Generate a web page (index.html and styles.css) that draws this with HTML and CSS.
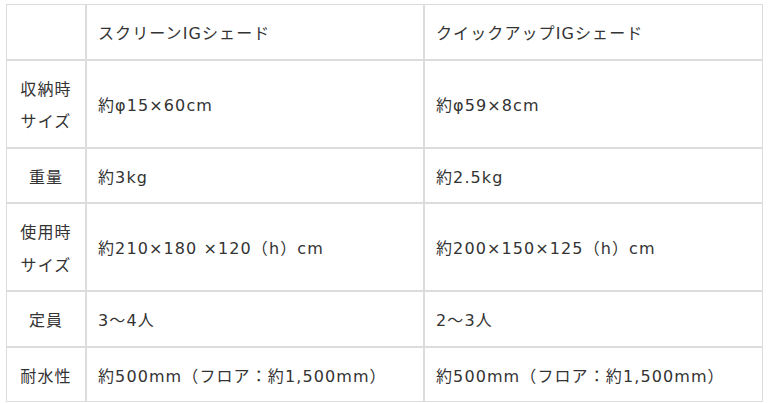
FILE: index.html
```html
<!DOCTYPE html>
<html lang="ja">
<head>
<meta charset="utf-8">
<link rel="stylesheet" href="styles.css">
</head>
<body>
<div class="wrap">
<table class="spec">
<colgroup><col class="c1"><col class="c2"><col class="c3"></colgroup>
<tr><th></th><td>スクリーンIGシェード</td><td>クイックアップIGシェード</td></tr>
<tr><th>収納時<br>サイズ</th><td>約φ15×60cm</td><td>約φ59×8cm</td></tr>
<tr><th>重量</th><td>約3kg</td><td>約2.5kg</td></tr>
<tr><th>使用時<br>サイズ</th><td>約210×180 ×120（h）cm</td><td>約200×150×125（h）cm</td></tr>
<tr><th>定員</th><td>3～4人</td><td>2～3人</td></tr>
<tr><th>耐水性</th><td>約500mm（フロア：約1,500mm）</td><td>約500mm（フロア：約1,500mm）</td></tr>
</table>
</div>
</body>
</html>
```
FILE: styles.css
```css
html, body {
  margin: 0;
  padding: 0;
  background: #fff;
}
.wrap {
  padding: 4px 5px 0 6px;
}
.spec {
  border-collapse: separate;
  border-spacing: 0;
  width: 757px;
  table-layout: fixed;
  font-family: "DejaVu Sans", "Noto Sans CJK JP", sans-serif;
  font-size: 16px;
  letter-spacing: 1.1px;
  color: #333;
}
.c1 { width: 80px; }
.c2 { width: 338px; }
.c3 { width: 339px; }
.spec th, .spec td {
  border: 1px solid #dcdcdc;
  padding: 13px 10px 8px 11px;
  line-height: 32.5px;
  vertical-align: middle;
  font-weight: normal;
  text-align: left;
  white-space: nowrap;
}
.spec th {
  text-align: center;
  padding-left: 4px;
  padding-right: 4px;
}
```
